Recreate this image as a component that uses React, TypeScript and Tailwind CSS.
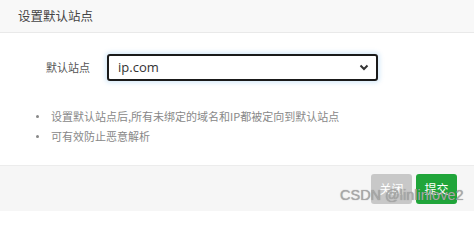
import React from "react";

export default function App() {
  const cjk = { fontFamily: '"Microsoft YaHei", "Noto Sans CJK SC", "Noto Sans", sans-serif' };
  return (
    <div className="relative w-[474px] h-[211px] overflow-hidden bg-white" style={cjk}>
      <div className="h-[33px] bg-[#f8f8f8] border-b border-[#e9e9e9] flex items-center pl-[18px] text-[12.5px] text-[#444]">
        设置默认站点
      </div>
      <div className="h-[132px] flex flex-col">
        <div className="flex items-center mt-[21px]">
          <div className="w-[90px] text-right text-[11px] text-[#555]">默认站点</div>
          <div className="ml-[17px] w-[271px] h-[27px] border-2 border-[#1a1a1a] rounded-[3px] shadow-[0_0_4px_2px_rgba(102,175,233,0.25)] flex items-center justify-between pl-[9px] pr-[7px]">
            <span className="text-[13px] text-[#333]" style={{ fontFamily: '"Open Sans", "Noto Sans", sans-serif' }}>ip.com</span>
            <svg width="10" height="7" viewBox="0 0 10 7">
              <path d="M1.5 1.5 L5 5 L8.5 1.5" fill="none" stroke="#333" strokeWidth="2" />
            </svg>
          </div>
        </div>
        <ul className="mt-[25px] text-[11px] text-[#888]">
          <li className="flex items-center h-[20px] pl-[36px]">
            <span className="w-[3px] h-[3px] rounded-full bg-[#888] mr-[12px]" />
            设置默认站点后,所有未绑定的域名和IP都被定向到默认站点
          </li>
          <li className="flex items-center h-[20px] pl-[36px]">
            <span className="w-[3px] h-[3px] rounded-full bg-[#888] mr-[12px]" />
            可有效防止恶意解析
          </li>
        </ul>
      </div>
      <div className="h-[46px] bg-[#f6f6f6] border-t border-[#ececec] flex justify-end items-start pt-[8px] pr-[17px] gap-[4px]">
        <button className="w-[41px] h-[30px] rounded-[3px] bg-[#c8c8c8] text-white text-[12px]">关闭</button>
        <button className="w-[41px] h-[30px] rounded-[3px] bg-[#20a53a] text-white text-[12px]">提交</button>
      </div>
      <div
        className="absolute left-[340px] top-[187px] text-[14.5px] leading-[16px] text-[#a8a8a8] whitespace-nowrap"
        style={{ fontFamily: '"Liberation Sans", Arial, sans-serif', textShadow: "0 0 1px rgba(90,90,90,0.6)" }}
      >
        CSDN @linlinlove2
      </div>
    </div>
  );
}
